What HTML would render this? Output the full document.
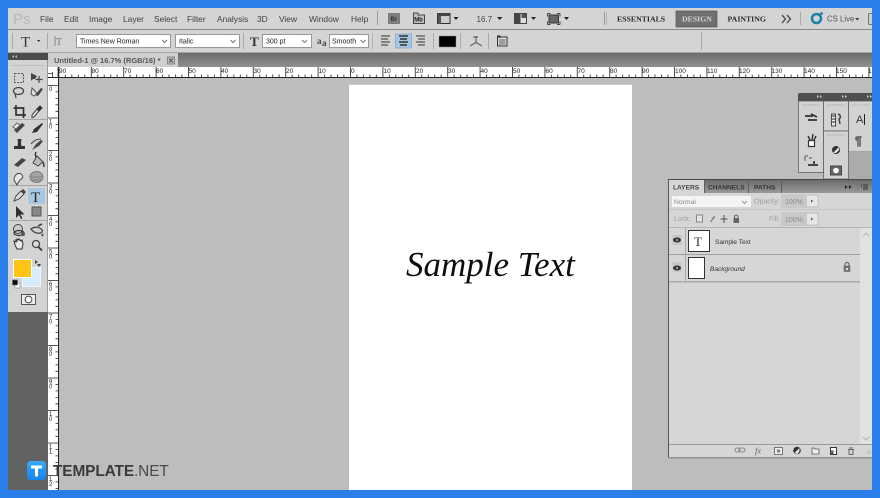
<!DOCTYPE html>
<html><head><meta charset="utf-8"><style>
html,body{margin:0;padding:0;background:#2a7fe8;width:880px;height:498px;overflow:hidden}
svg{display:block}
text{font-family:"Liberation Sans",sans-serif}
.m{font-size:8.4px;fill:#3f3f3f}
.b{font-weight:bold;font-size:7.800px;fill:#2a2a2a;font-family:"Liberation Serif",serif}
.r{font-size:6.500px;fill:#222}
.v{font-size:6px;fill:#222}
.o{font-size:7px;fill:#222}
.g{font-size:7px;fill:#a0a0a0}
</style></head><body>
<svg width="880" height="498" viewBox="0 0 880 498" xmlns="http://www.w3.org/2000/svg">
<defs>
<filter id="bl" filterUnits="userSpaceOnUse" x="0" y="0" width="880" height="498"><feGaussianBlur stdDeviation=".32"/></filter>
<pattern id="ht" x="350" y="67" width="32.4" height="10" patternUnits="userSpaceOnUse">
<rect width="32.4" height="10" fill="#fff"/>
<path d="M.5 0V10M6.9 7.500V10M13.400 7.500V10M19.900 7.500V10M26.300 7.500V10" stroke="#222" stroke-width=".8"/>
</pattern>
<pattern id="vt" x="48" y="85" width="10" height="32.500" patternUnits="userSpaceOnUse">
<rect width="10" height="32.500" fill="#fff"/>
<path d="M0 .5H10M7.500 6.900H10M7.500 13.400H10M7.500 19.900H10M7.500 26.300H10" stroke="#222" stroke-width=".8"/>
</pattern>
<linearGradient id="tb" x1="0" y1="0" x2="0" y2="1"><stop offset="0" stop-color="#6d6d6d"/><stop offset="1" stop-color="#8f8f8f"/></linearGradient>
<linearGradient id="ph" x1="0" y1="0" x2="0" y2="1"><stop offset="0" stop-color="#6a6a6a"/><stop offset="1" stop-color="#999"/></linearGradient>
<linearGradient id="tl" x1="0" y1="0" x2="0" y2="1"><stop offset="0" stop-color="#38a8f8"/><stop offset="1" stop-color="#1583ee"/></linearGradient>
</defs>

<rect width="880" height="498" fill="#2a7fe8"/>
<g filter="url(#bl)">
<!-- canvas -->
<rect x="58" y="77" width="814" height="413" fill="#bdbdbd"/>
<rect x="349" y="85" width="283" height="405" fill="#fff"/>
<rect x="348" y="84" width="285" height="1" fill="#c9c9c9"/>
<text x="406" y="276" style="font-family:'Liberation Serif',serif;font-style:italic;font-size:35px;fill:#111">Sample Text</text>

<!-- menu bar -->
<rect x="8" y="8" width="864" height="22" fill="#d4d4d4"/>
<rect x="8" y="29" width="864" height="1" fill="#8a8a8a"/>
<text x="13" y="24" style="font-size:15px;fill:#b8b8b8;letter-spacing:.2px">Ps</text>
<text class="m" x="40" y="22">File</text>
<text class="m" x="64" y="22">Edit</text>
<text class="m" x="89" y="22">Image</text>
<text class="m" x="123" y="22">Layer</text>
<text class="m" x="154" y="22">Select</text>
<text class="m" x="187" y="22">Filter</text>
<text class="m" x="217" y="22">Analysis</text>
<text class="m" x="257" y="22">3D</text>
<text class="m" x="279" y="22">View</text>
<text class="m" x="309" y="22">Window</text>
<text class="m" x="351" y="22">Help</text>
<rect x="377" y="11" width="1" height="14" fill="#999"/>
<!-- Br / Mb / screen -->
<rect x="388.500" y="13.500" width="11" height="10" fill="#808080" stroke="#666" stroke-width=".7"/>
<text x="390.500" y="21" style="font-size:6px;font-weight:bold;fill:#333">Br</text>
<path d="M413.500 23.500V13H418V15H424.500V23.500Z" fill="#c0c0c0" stroke="#444"/>
<text x="414.200" y="21.500" style="font-size:6px;font-weight:bold;fill:#222">Mb</text>
<rect x="437.500" y="13.500" width="12.500" height="10" fill="#ccc" stroke="#333"/><rect x="437" y="13" width="13" height="3" fill="#444"/><rect x="438" y="16" width="3" height="8" fill="#555"/>
<path d="M453.500 17h5l-2.500 3z" fill="#222"/>
<text x="476.500" y="22" style="font-size:8px;fill:#444">16.7</text>
<path d="M497 17h5.500l-2.700 3z" fill="#222"/>
<rect x="514.500" y="13.500" width="12" height="10" fill="#ddd" stroke="#444"/><rect x="515" y="14" width="5.500" height="9" fill="#444"/><rect x="521.500" y="14" width="4.500" height="4" fill="#555"/>
<path d="M531 17h5l-2.500 3z" fill="#222"/>
<rect x="549" y="15" width="9.500" height="8" fill="#666" stroke="#333"/><path d="M547.500 13.500h3M547.500 13.500v3M560 13.500h-3M560 13.500v3M547.500 24.500h3M547.500 24.500v-3M560 24.500h-3M560 24.500v-3" stroke="#444" stroke-width="1" fill="none"/>
<path d="M564 17h5l-2.500 3z" fill="#222"/>
<!-- workspace -->
<rect x="604" y="12" width="1" height="13" fill="#9a9a9a"/><rect x="606" y="12" width="1" height="13" fill="#b5b5b5"/>
<text class="b" x="617" y="21.500">ESSENTIALS</text>
<rect x="676" y="11" width="41" height="16" fill="#6f6f6f" stroke="#555" stroke-width=".7"/>
<text class="b" x="682" y="21.500" style="fill:#d6d6d6">DESIGN</text>
<text class="b" x="727.500" y="21.500">PAINTING</text>
<path d="M782 15l3.500 4-3.500 4M787 15l3.500 4-3.500 4" fill="none" stroke="#555" stroke-width="1.400"/>
<rect x="800" y="12" width="1" height="13" fill="#aaa"/>
<circle cx="816.500" cy="18.500" r="4.500" fill="none" stroke="#1e7fa8" stroke-width="2.500"/><circle cx="821.500" cy="13.500" r="1.400" fill="#1e7fa8"/>
<text x="827" y="21.500" style="font-size:7.800px;fill:#555">CS Live</text>
<path d="M855 18h4.500l-2.200 2.500z" fill="#444"/>
<rect x="868.500" y="13.500" width="8" height="11" rx="1" fill="#ccc" stroke="#777"/>

<!-- options bar -->
<rect x="8" y="30" width="864" height="23" fill="#d4d4d4"/>
<rect x="8" y="52" width="864" height="1" fill="#a5a5a5"/>
<rect x="12" y="33" width="1" height="16" fill="#aaa"/>
<text x="21" y="46.500" style="font-family:'Liberation Serif',serif;font-size:15px;fill:#333">T</text>
<path d="M37 40h3.500l-1.700 2z" fill="#333"/>
<rect x="47" y="33" width="1" height="16" fill="#aaa"/>
<text x="56" y="45" style="font-family:'Liberation Serif',serif;font-size:10px;fill:#777">T</text><path d="M55 36v10" stroke="#888"/>
<rect x="76.500" y="34.500" width="94" height="13" fill="#fff" stroke="#999"/>
<text class="o" x="80" y="43.500">Times New Roman</text>
<path d="M162 40l2.500 2.500 2.500-2.500" fill="none" stroke="#777"/>
<rect x="175.500" y="34.500" width="64" height="13" fill="#fff" stroke="#999"/>
<text class="o" x="179" y="43.500">Italic</text>
<path d="M230.500 40l2.500 2.500 2.500-2.500" fill="none" stroke="#777"/>
<rect x="243" y="33" width="1" height="16" fill="#aaa"/>
<text x="250" y="46" style="font-family:'Liberation Serif',serif;font-size:13px;font-weight:bold;fill:#333">T</text>
<rect x="262.500" y="34.500" width="49" height="13" fill="#fff" stroke="#999"/>
<text class="o" x="266" y="43.500">300 pt</text>
<path d="M302 40l2.500 2.500 2.500-2.500" fill="none" stroke="#777"/>
<text x="317" y="44" style="font-family:'Liberation Serif',serif;font-size:9px;font-weight:bold;fill:#444">a</text>
<text x="322" y="46" style="font-family:'Liberation Serif',serif;font-size:9px;font-weight:bold;fill:#444">a</text>
<rect x="329.500" y="34.500" width="39" height="13" fill="#fff" stroke="#999"/>
<text class="o" x="332" y="43.500">Smooth</text>
<path d="M360.500 40l2.500 2.500 2.500-2.500" fill="none" stroke="#777"/>
<rect x="372" y="33" width="1" height="16" fill="#b5b5b5"/>
<path d="M381 36h9M381 39h7M381 42h9M381 45h7" stroke="#666" stroke-width="1.400"/>
<rect x="395.500" y="34" width="16" height="14" fill="#a6c6e2" stroke="#8fb3d2"/>
<path d="M399 36h9M400 39h7M399 42h9M400 45h7" stroke="#333" stroke-width="1.400"/>
<path d="M416 36h9M418 39h7M416 42h9M418 45h7" stroke="#666" stroke-width="1.400"/>
<rect x="433" y="33" width="1" height="16" fill="#aaa"/>
<rect x="439" y="36" width="17" height="11" fill="#000" stroke="#888" stroke-width=".5"/>
<rect x="460" y="33" width="1" height="16" fill="#aaa"/>
<path d="M476 36v7M473 37h5M470 46l5-3h2l5 3" fill="none" stroke="#666" stroke-width="1.200"/>
<rect x="488" y="33" width="1" height="16" fill="#aaa"/>
<rect x="497.500" y="37" width="9.500" height="9" fill="#ddd" stroke="#333"/><path d="M499 40h6.500M499 42h6.500M499 44h6.500" stroke="#333" stroke-width=".7"/><path d="M497 36h3v2" fill="none" stroke="#333"/>
<rect x="701" y="32" width="1" height="18" fill="#aaa"/>

<!-- tab bar -->
<rect x="48" y="53" width="824" height="14" fill="url(#tb)"/>
<rect x="48" y="53" width="130" height="14" fill="#cfcfcf"/>
<text x="54" y="63" style="font-size:7.500px;font-weight:bold;fill:#555">Untitled-1 @ 16.7% (RGB/16) *</text>
<rect x="167.500" y="57" width="7" height="7" fill="#bbb" stroke="#888"/><path d="M169 58.500l4 4M173 58.500l-4 4" stroke="#555"/>

<!-- horizontal ruler -->
<rect x="48" y="67" width="824" height="10" fill="url(#ht)"/>
<rect x="48" y="77" width="824" height="1" fill="#222"/>
<rect x="48" y="67" width="10" height="10" fill="#fff"/>
<path d="M52.500 72v5M48 73.500h5M58 67v10" stroke="#333" stroke-width=".8"/>
<text class="r" x="59" y="73">90</text><text class="r" x="91.500" y="73">80</text><text class="r" x="124" y="73">70</text><text class="r" x="156" y="73">60</text><text class="r" x="188.500" y="73">50</text><text class="r" x="221" y="73">40</text><text class="r" x="253.500" y="73">30</text><text class="r" x="286" y="73">20</text><text class="r" x="318.500" y="73">10</text><text class="r" x="351" y="73">0</text><text class="r" x="383.500" y="73">10</text><text class="r" x="416" y="73">20</text><text class="r" x="448" y="73">30</text><text class="r" x="480.500" y="73">40</text><text class="r" x="513" y="73">50</text><text class="r" x="545.500" y="73">60</text><text class="r" x="577.500" y="73">70</text><text class="r" x="610" y="73">80</text><text class="r" x="642" y="73">90</text><text class="r" x="675" y="73">100</text><text class="r" x="707" y="73">110</text><text class="r" x="739" y="73">120</text><text class="r" x="771.500" y="73">130</text><text class="r" x="804" y="73">140</text><text class="r" x="836" y="73">150</text><text class="r" x="868" y="73">160</text>

<!-- vertical ruler -->
<rect x="48" y="78" width="10" height="412" fill="url(#vt)"/>
<rect x="58" y="67" width="1" height="423" fill="#222"/>
<rect x="48" y="78" width="10" height="7" fill="#fff"/>
<text class="v" x="49" y="91">0</text>
<text class="v" x="49" y="123.500">1</text><text class="v" x="49" y="128.500">0</text>
<text class="v" x="49" y="156">2</text><text class="v" x="49" y="161">0</text>
<text class="v" x="49" y="188.500">3</text><text class="v" x="49" y="193.500">0</text>
<text class="v" x="49" y="221">4</text><text class="v" x="49" y="226">0</text>
<text class="v" x="49" y="253.500">5</text><text class="v" x="49" y="258.500">0</text>
<text class="v" x="49" y="286">6</text><text class="v" x="49" y="291">0</text>
<text class="v" x="49" y="318.500">7</text><text class="v" x="49" y="323.500">0</text>
<text class="v" x="49" y="351">8</text><text class="v" x="49" y="356">0</text>
<text class="v" x="49" y="383.500">9</text><text class="v" x="49" y="388.500">0</text>
<text class="v" x="49" y="416">1</text><text class="v" x="49" y="421">0</text>
<text class="v" x="49" y="448.500">1</text><text class="v" x="49" y="453.500">1</text>
<text class="v" x="49" y="481">1</text><text class="v" x="49" y="486">2</text>

<!-- toolbar -->
<rect x="8" y="53" width="40" height="7" fill="#4b4b4b"/>
<path d="M14 55v3l-2-1.500zM17 55v3l-2-1.500z" fill="#bbb"/>
<rect x="8" y="60" width="40" height="252" fill="#d3d3d3"/>
<rect x="8" y="312" width="40" height="178" fill="#626262"/>
<rect x="47" y="60" width="1" height="252" fill="#9a9a9a"/>
<path d="M12 65.500h32" stroke="#aaa" stroke-dasharray="1.500 1.500"/>
<rect x="9" y="119" width="38" height="1" fill="#a5a5a5"/>
<rect x="9" y="185" width="38" height="1" fill="#a5a5a5"/>
<rect x="9" y="220" width="38" height="1" fill="#a5a5a5"/>
<rect x="28" y="188" width="17" height="16" fill="#a9c7e0"/>
<!-- row 1 -->
<rect x="14.500" y="73.500" width="9" height="9" fill="none" stroke="#555" stroke-dasharray="2 1.200"/>
<path d="M31 73v8l2-2 2 0 2-3z" fill="#444"/><path d="M39 76v7M35.500 79.500h7" stroke="#444" stroke-width="1.200"/>
<!-- row 2 -->
<ellipse cx="18.500" cy="91" rx="5" ry="3.500" fill="none" stroke="#444" stroke-width="1.300"/><path d="M15 94l1 4" stroke="#444" stroke-width="1.200"/>
<path d="M32 88l3 3 2 3-3 2-3-2z" fill="#ddd" stroke="#555"/><path d="M35 95l6-7 2 1-5 7z" fill="#444"/>
<!-- row 3 -->
<path d="M16 105v10h10M13.500 108h10v10" fill="none" stroke="#333" stroke-width="1.700"/>
<path d="M32 115l5-6 2 2-5 6-2 .5z" fill="#ddd" stroke="#444"/><path d="M37 109l3-3 2 2-3 3z" fill="#333" stroke="#333"/>
<!-- row 4 -->
<path d="M14 130l8-7 3 2-8 8z" fill="#444"/><path d="M13 127l4-4 3 2-4 4z" fill="#eee" stroke="#666"/>
<path d="M32 133l2-4 8-6 1 1-6 8z" fill="#333"/>
<!-- row 5 -->
<path d="M14 149h11v-3h-3.500l-.5-3 .5-4h-4l.5 4-.5 3H14z" fill="#333"/>
<path d="M32 150l4-6 5-4 2 1-4 5-2 1z" fill="#444"/><path d="M31 144c3-4 7-5 10-5" fill="none" stroke="#444"/>
<!-- row 6 -->
<path d="M14 165l8-7 4 2-8 7z" fill="#444"/>
<path d="M33 163l4-7 6 6-5 4z" fill="#bbb" stroke="#444"/><path d="M36 152c-1 2-1 3 0 5M43 162c1 2 1 3 1 5" fill="none" stroke="#333" stroke-width="1.400"/>
<!-- row 7 -->
<path d="M14 180c0-5 4-8 7-6s2 4-1 6l-2 3-1 2z" fill="#e8e8e8" stroke="#444"/>
<ellipse cx="36.500" cy="177" rx="6.500" ry="5.500" fill="#a5a5a5" stroke="#777"/><path d="M31 177h11M32 180h9" stroke="#777" stroke-width=".7"/>
<!-- row 8 -->
<path d="M14 201l2-5 5-5 3 3-5 5z" fill="#ddd" stroke="#444"/><path d="M21 191l2-2 3 3-2 2z" fill="#444"/>
<text x="31" y="202" style="font-family:'Liberation Serif',serif;font-size:15px;fill:#222">T</text>
<!-- row 9 -->
<path d="M16 206v12l3-3 2 4 1.500-.5-2-4h4z" fill="#333"/>
<rect x="32" y="207" width="9" height="9" fill="#888" stroke="#555"/>
<!-- row 10 -->
<circle cx="18" cy="229" r="4.500" fill="#ccc" stroke="#444"/><ellipse cx="19" cy="233" rx="5" ry="2.500" fill="none" stroke="#333" stroke-width="1.200"/><circle cx="23" cy="234" r="2" fill="#555"/>
<path d="M31 229c4-3 9-2 11 1 1 2-1 4-5 3-2-.5-4-1-6-4z" fill="none" stroke="#444" stroke-width="1.300"/><path d="M38 226l4-2" stroke="#444" stroke-width="1.800"/><path d="M42 236l1-2" stroke="#444" stroke-width="1.800"/>
<!-- row 11 -->
<path d="M15 245l-1-4 2 1V240l1 1v-2l2 1v-1l2 2 1-1 1 4-1 5h-5z" fill="#e8e8e8" stroke="#333"/>
<circle cx="36" cy="244" r="3.500" fill="#ddd" stroke="#444" stroke-width="1.300"/><path d="M38.500 247l3.500 3.500" stroke="#333" stroke-width="1.800"/>
<!-- colour -->
<rect x="22.500" y="267.500" width="18" height="19" fill="#d6ebfc" stroke="#eef5fb"/>
<rect x="13.500" y="259.500" width="18" height="18" fill="#fec514" stroke="#fff"/>
<path d="M35 260l3 2-3 2zM41 264l-2 3-2-3z" fill="#444"/>
<rect x="15" y="283" width="5" height="5" fill="#fff" stroke="#888" stroke-width=".6"/>
<rect x="12.500" y="280" width="5" height="5" fill="#111" stroke="#666" stroke-width=".6"/>
<rect x="21.500" y="294.500" width="14" height="10" fill="#eee" stroke="#555"/><circle cx="28.500" cy="299.500" r="3.400" fill="#fff" stroke="#444"/>

<!-- dock panel -->
<path d="M798 101v-6a2 2 0 0 1 2-2h72v8z" fill="#4f4f4f"/>
<rect x="798.500" y="101" width="25" height="71.500" fill="#d2d2d2" stroke="#555" stroke-width=".7"/>
<rect x="823.500" y="101" width="25" height="30" fill="#d2d2d2" stroke="#555" stroke-width=".7"/>
<rect x="823.500" y="131" width="25" height="48" fill="#d2d2d2" stroke="#555" stroke-width=".7"/>
<rect x="848.500" y="101" width="24" height="51" fill="#d2d2d2" stroke="#555" stroke-width=".7"/>
<rect x="849" y="152" width="23" height="27" fill="#ababab"/>
<path d="M817 95v3l2-1.500zM820 95v3l2-1.500zM842 95v3l2-1.500zM845 95v3l2-1.500zM867 95v3l2-1.500zM870 95v3l2-1.500z" fill="#ccc"/>
<path d="M802 105h18M827 105h18M852 105h18M827 135h18" stroke="#aaa" stroke-dasharray="1.500 1"/>
<path d="M805 116h8M811 114l6 3M808 120h9" stroke="#333" stroke-width="1.700" fill="none"/>
<path d="M808 136l2 4M813 134l-1 6M816 136l-2 4" stroke="#333" stroke-width="1.400"/><rect x="808.500" y="140.500" width="6" height="6" fill="#fff" stroke="#333" stroke-width="1.200"/>
<path d="M805 156v5M805 156h3M809 158h3" stroke="#555" fill="none"/><path d="M808 164h5v-3h2v3h3v2h-10z" fill="#444"/>
<rect x="831.500" y="114" width="4" height="12" fill="#eee" stroke="#444"/><path d="M832 116h3M832 119h3M832 122h3" stroke="#222"/><path d="M838 114c3 1 3 4 1 5l1 5" fill="none" stroke="#444" stroke-width="1.500"/>
<circle cx="836" cy="150" r="4" fill="#333"/><path d="M833 153l6-6 0 3-3 3z" fill="#eee"/>
<rect x="830.500" y="166" width="11" height="9" fill="#666" stroke="#444"/><circle cx="836" cy="170.500" r="2.800" fill="#fff"/>
<text x="856" y="123" style="font-size:11px;fill:#333">A</text><rect x="864" y="114" width="1" height="11" fill="#222"/>
<text x="855" y="145" style="font-size:12px;font-weight:bold;fill:#666;stroke:#666;stroke-width:.7">¶</text>

<!-- layers panel -->
<rect x="668" y="179" width="204" height="278" fill="#d6d6d6"/>
<rect x="668" y="179" width="204" height="1" fill="#4a4a4a"/>
<rect x="668" y="179" width="1" height="278" fill="#555"/>
<rect x="668" y="457" width="204" height="1.500" fill="#8f8f8f"/>
<rect x="669" y="180" width="203" height="13" fill="url(#ph)"/>
<rect x="669" y="180" width="35" height="13" fill="#d6d6d6"/>
<rect x="704" y="181" width="1" height="12" fill="#5d5d5d"/><rect x="748" y="181" width="1" height="12" fill="#5d5d5d"/><rect x="781" y="181" width="1" height="12" fill="#5d5d5d"/>
<text x="673" y="189.500" style="font-size:6.600px;font-weight:bold;fill:#444">LAYERS</text>
<text x="708" y="189.500" style="font-size:6.600px;font-weight:bold;fill:#333">CHANNELS</text>
<text x="754" y="189.500" style="font-size:6.600px;font-weight:bold;fill:#333">PATHS</text>
<path d="M845 185v4l2.500-2zM849 185v4l2.500-2z" fill="#222"/>
<rect x="857" y="184" width="1" height="6" fill="#777"/>
<path d="M861 185h1M861 187h1M863 185h5M863 187h5M863 189h5" stroke="#333"/>
<rect x="672" y="196" width="79" height="11" fill="#f4f4f4"/>
<text x="674" y="204" style="font-size:6.800px;fill:#888">Normal</text>
<path d="M742 201l2.500 2.500 2.500-2.500" fill="none" stroke="#999"/>
<text class="g" x="754" y="203.500">Opacity:</text>
<rect x="782" y="195" width="36" height="12" fill="#e6e6e6" stroke="#bdbdbd"/><rect x="782" y="195" width="25" height="12" fill="#c8c8c8"/>
<text class="g" x="785" y="204" style="fill:#8a8a8a">100%</text>
<path d="M811 199.500v3l2.200-1.500z" fill="#555"/>
<rect x="669" y="209" width="203" height="1" fill="#c4c4c4"/>
<text class="g" x="674" y="221">Lock:</text>
<rect x="696.500" y="215" width="6" height="7" fill="#e5e5e5" stroke="#888"/>
<path d="M710 222l4-6 1 1-4 5z" fill="#666"/>
<path d="M724 215v8M720.500 219h7" stroke="#666" stroke-width="1.200"/>
<rect x="733.500" y="218" width="5.500" height="5" fill="#666"/><path d="M734.500 218v-1.500a1.800 1.800 0 0 1 3.500 0v1.500" fill="none" stroke="#666"/>
<text class="g" x="769" y="221">Fill:</text>
<rect x="782" y="213" width="36" height="12" fill="#e6e6e6" stroke="#bdbdbd"/><rect x="782" y="213" width="25" height="12" fill="#c8c8c8"/>
<text class="g" x="785" y="222" style="fill:#8a8a8a">100%</text>
<path d="M811 217.500v3l2.200-1.500z" fill="#555"/>
<rect x="669" y="227" width="203" height="1" fill="#b5b5b5"/>
<!-- scrollbar -->
<rect x="860" y="228" width="12" height="216" fill="#e1e1e1"/>
<path d="M863 236l3-3 3 3" fill="none" stroke="#b5b5b5"/>
<path d="M863 437l3 3 3-3" fill="none" stroke="#b5b5b5"/>
<!-- layers -->
<rect x="669" y="254" width="191" height="1" fill="#a0a0a0"/>
<rect x="669" y="281" width="191" height="1.500" fill="#aaa"/>
<rect x="685" y="228" width="1" height="54" fill="#a8a8a8"/>
<rect x="672.500" y="235" width="9" height="10" fill="#c6c6c6"/><rect x="672.500" y="262" width="9" height="10" fill="#c6c6c6"/>
<ellipse cx="677" cy="240" rx="4" ry="2.500" fill="#333"/><circle cx="677" cy="240" r="1" fill="#bbb"/>
<ellipse cx="677" cy="268" rx="4" ry="2.500" fill="#333"/><circle cx="677" cy="268" r="1" fill="#bbb"/>
<rect x="688.500" y="230.500" width="21" height="21" fill="#fff" stroke="#333"/>
<text x="694" y="246" style="font-family:'Liberation Serif',serif;font-size:13px;fill:#333">T</text>
<text x="715" y="244" style="font-size:6.500px;fill:#333">Sample Text</text>
<rect x="688.500" y="257.500" width="16" height="21" fill="#fff" stroke="#333"/>
<text x="710" y="271" style="font-size:6.500px;font-style:italic;fill:#333">Background</text>
<rect x="844" y="266" width="6" height="5.500" fill="#777" stroke="#555" stroke-width=".5"/><path d="M845 266v-1.500a2 2 0 0 1 4 0v1.500" fill="none" stroke="#555"/><rect x="846" y="268" width="2" height="2" fill="#ddd"/>
<!-- footer -->
<rect x="669" y="444" width="203" height="1" fill="#999"/>
<rect x="735" y="448" width="5" height="4" rx="2" fill="none" stroke="#888"/><rect x="739" y="448" width="6" height="4" rx="2" fill="none" stroke="#888"/>
<text x="755" y="453.500" style="font-family:'Liberation Serif',serif;font-size:8.500px;font-style:italic;fill:#666">fx</text>
<rect x="774.500" y="447.500" width="8" height="7" fill="#eee" stroke="#777"/><circle cx="778.500" cy="451" r="1.800" fill="#888"/>
<circle cx="797" cy="450.500" r="3.800" fill="#333"/><path d="M794.500 453l5-5v3l-2 3z" fill="#eee"/>
<path d="M812 448h2l1 1h4v5h-7z" fill="#eee" stroke="#555" stroke-width=".8"/>
<rect x="830.500" y="447.500" width="6" height="7" fill="#fff" stroke="#333"/><rect x="830.500" y="450.500" width="3" height="4" fill="#555"/>
<path d="M849 448h4M848 449.500h6M849 450v4.500h4V450" fill="none" stroke="#666"/>
<path d="M866 454l4-4M868.500 454l2-2" stroke="#bbb"/>
</g>

<!-- blue frame -->
<rect x="0" y="0" width="880" height="8" fill="#2a7fe8"/>
<rect x="0" y="490" width="880" height="8" fill="#2a7fe8"/>
<rect x="0" y="0" width="8" height="498" fill="#2a7fe8"/>
<rect x="872" y="0" width="8" height="498" fill="#2a7fe8"/>

<!-- watermark -->
<rect x="27" y="461" width="19" height="19" rx="3.500" fill="url(#tl)"/>
<path d="M31 465.500h11v3h-4v8h-3v-8h-4z" fill="#fff"/>
<text x="53" y="476" style="font-size:15.400px;font-weight:bold;fill:#3a3a3a;letter-spacing:-.1px">TEMPLATE<tspan style="font-weight:normal;fill:#4a4a4a">.NET</tspan></text>
</svg>
</body></html>
